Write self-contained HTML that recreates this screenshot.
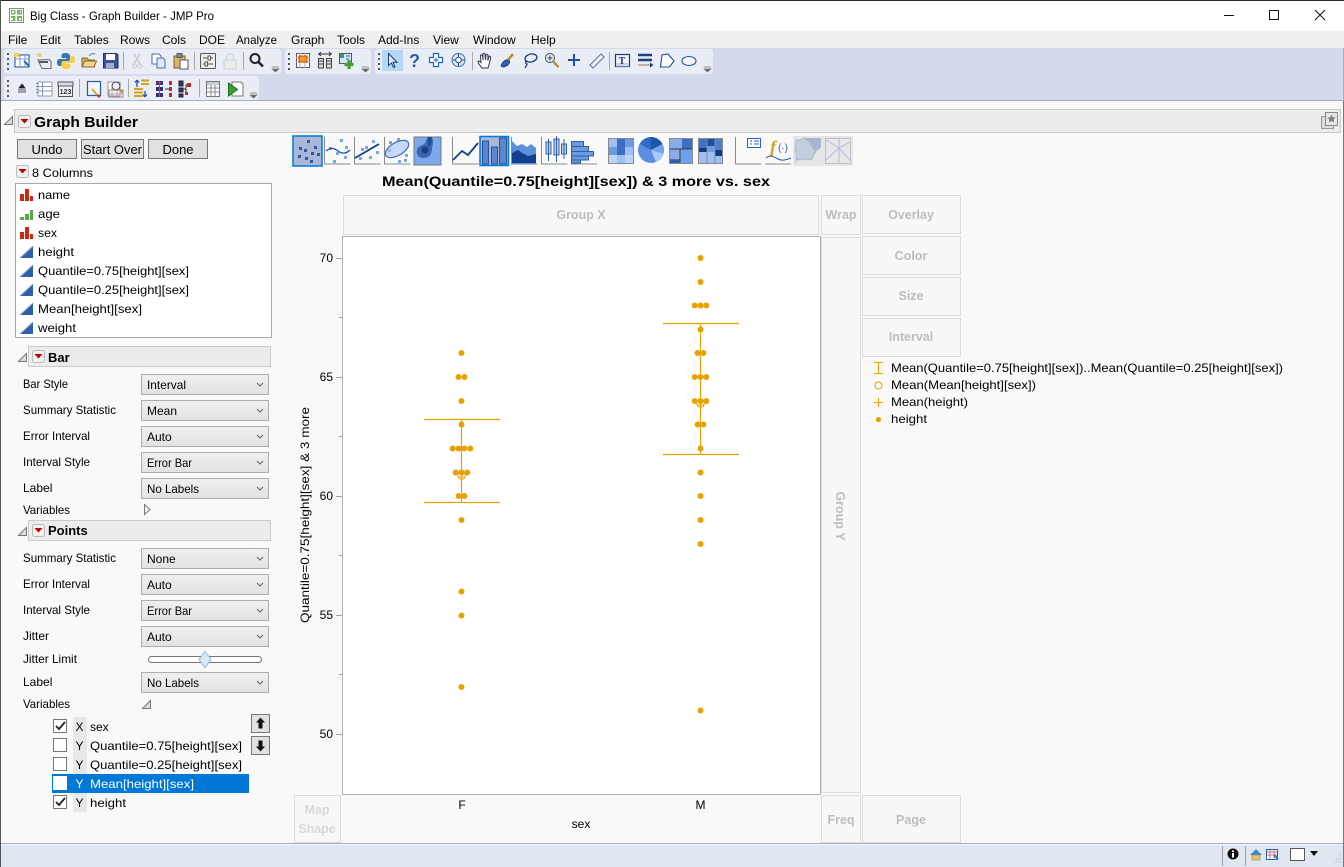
<!DOCTYPE html>
<html><head><meta charset="utf-8"><title>Big Class - Graph Builder - JMP Pro</title>
<style>
html,body{margin:0;padding:0;width:1344px;height:867px;overflow:hidden;background:#f9f9f9}
svg{display:block;position:absolute;left:0;top:0}
text{font-family:"Liberation Sans",sans-serif;font-size:12px;fill:#000}
.b{font-weight:bold}
.g{fill:#bdbdbd;font-weight:bold;font-size:12.5px;text-anchor:middle}
.m{text-anchor:middle}
.e{text-anchor:end}
.z{fill:#f8f8f8;stroke:#dcdcdc}
.sel{fill:#e6e6e6;stroke:#adadad}
.btn{fill:#e1e1e1;stroke:#777}
.hd{fill:#ececec;stroke:#cacaca}
.ck{fill:#fff;stroke:#777}
.d{fill:#e8a200}
.o{stroke:#e8a200;fill:none}
</style></head><body>
<svg width="1344" height="867" viewBox="0 0 1344 867" xmlns="http://www.w3.org/2000/svg">
<defs>
<linearGradient id="sg" x1="0" y1="0" x2="0" y2="1"><stop offset="0" stop-color="#f0f0f0"/><stop offset="1" stop-color="#e2e2e2"/></linearGradient>
<symbol id="red" overflow="visible"><rect x=".5" y=".5" width="12" height="12" rx="2" fill="#f0f0f0" stroke="#bbb"/><path d="M2.5 4h8l-4 4.500z" fill="#c00000"/></symbol>
<symbol id="tri" overflow="visible"><path d="M.5 8.500L8.500 .5v8z" fill="#ddd" stroke="#777"/></symbol>
<symbol id="nom" overflow="visible"><path d="M0 13V6h4v7zM5 13V1h4v12zM10 13V8h3v5z" fill="#c8280f"/></symbol>
<symbol id="ord" overflow="visible"><path d="M0 13v-3h4v3zM5 13V7h4v6z" fill="#57a94a"/><path d="M10 13V3h3v10z" fill="#57a94a"/></symbol>
<symbol id="con" overflow="visible"><path d="M0 13L13 1v12z" fill="#2e5fa8"/><path d="M0 13L13 1" stroke="#8aa8d8" fill="none"/></symbol>
<symbol id="sa" overflow="visible"><path d="M5 5l3 3 3-3" stroke="#666" fill="none" stroke-width="1.100"/></symbol>
<symbol id="dd" overflow="visible"><path d="M0 0h7M0 2h7l-3.500 3z" fill="#666" stroke="#777" stroke-width=".7"/></symbol>
<symbol id="grip" overflow="visible"><path d="M0 0h2v2H0zM0 5h2v2H0zM0 10h2v2H0zM0 15h2v2H0z" fill="#555"/></symbol>
<symbol id="frame" overflow="visible"><path d="M.5 0v27h26" stroke="#8a8a8a" fill="none"/></symbol>
</defs>

<!-- window -->
<rect width="1344" height="867" fill="#f9f9f9"/>
<rect width="1344" height="31" y="1" fill="#fff"/>
<rect width="1344" height="1" fill="#2b2b2b"/>
<rect x="9.500" y="8.500" width="14" height="14" stroke="#8a8a8a" fill="#fff"/>
<path d="M11 10h4.500v4.500H11zM17 10h5v4.500h-5zM11 16h4.500v5H11zM17 16h5v5h-5z" fill="#7fb060"/>
<path d="M12 11h2v2h-2zM20 11h1v2h-1zM11 18h2v2h-2zM19 18h2v2h-2z" fill="#fff"/>
<text x="30" y="20" textLength="184" lengthAdjust="spacingAndGlyphs">Big Class - Graph Builder - JMP Pro</text>
<path d="M1224 15.500h10" stroke="#111"/><rect x="1269.500" y="10.500" width="9" height="9" fill="none" stroke="#111"/><path d="M1315 10l10 10M1325 10l-10 10" stroke="#111"/>

<!-- menu -->
<rect y="31" width="1344" height="17" fill="#efefef"/>
<g>
<text x="8" y="44">File</text><text x="40" y="44">Edit</text><text x="74" y="44">Tables</text><text x="120" y="44">Rows</text><text x="162" y="44">Cols</text><text x="199" y="44">DOE</text><text x="236" y="44" textLength="41" lengthAdjust="spacingAndGlyphs">Analyze</text><text x="291" y="44">Graph</text><text x="337" y="44">Tools</text><text x="378" y="44">Add-Ins</text><text x="433" y="44">View</text><text x="473" y="44">Window</text><text x="531" y="44">Help</text>
</g>

<!-- toolbars -->
<rect y="48" width="1344" height="52" fill="#d4daec"/>
<rect y="100" width="1344" height="1" fill="#a3acd0"/>
<rect x="1343" y="48" width="1" height="53" fill="#a3acd0"/>
<g fill="#e9edf6">
<rect x="4" y="49" width="277" height="25" rx="3"/><rect x="285" y="49" width="86" height="25" rx="3"/><rect x="375" y="49" width="338" height="25" rx="3"/><rect x="4" y="76" width="255" height="24" rx="3"/>
</g>
<use href="#grip" x="7" y="53"/><use href="#grip" x="288" y="53"/><use href="#grip" x="378" y="53"/><use href="#grip" x="7" y="80"/>
<use href="#dd" x="272" y="67"/><use href="#dd" x="362" y="67"/><use href="#dd" x="704" y="67"/><use href="#dd" x="250" y="93"/>
<path d="M123.500 52v18M194.500 52v18M243.500 52v18M472.500 52v18M609.500 52v18M79.500 79v18M128.500 79v18M199.500 79v18" stroke="#a8a8a8"/>

<!-- row 1 group 1 -->
<rect x="15" y="55" width="14" height="12" fill="#fff" stroke="#1d4f91"/><path d="M15 59h14M20 55v12M25 55v12" stroke="#7d9cc4"/><path d="M14 53h5v4h-5z" fill="#f2d24a"/><path d="M24 61l5 5" stroke="#1d6fc4" stroke-width="2"/>
<path d="M38 60l11-.5 2 2v7H42z" fill="#e8edf4" stroke="#667"/><path d="M37 53h5v4h-5z" fill="#efd27a"/><path d="M39 62h9" stroke="#555" stroke-width="2"/>
<path d="M66 53c-3.500 0-4.500 1-4.500 3v2h5v1h-7c-2 0-2.500 1.500-2.500 3.500s1 3.500 2.500 3.500h2v-2.500c0-1.500 1-2.500 2.500-2.500h4c1.500 0 2-1 2-2v-3c0-2-2-3-4-3z" fill="#3a76a8"/>
<path d="M66 69c3.500 0 4.500-1 4.500-3v-2h-5v-1h7c2 0 2.500-1.500 2.500-3.500s-1-3.500-2.500-3.500h-2v2.500c0 1.500-1 2.500-2.500 2.500h-4c-1.500 0-2 1-2 2v3c0 2 2 3 4 3z" fill="#f6cf45"/>
<path d="M82 67v-9h5l1.500 2h6v7z" fill="#d6ad58" stroke="#8a6a2c"/><path d="M82 67l2.500-6h12l-2.500 6z" fill="#f1d58e" stroke="#8a6a2c"/><path d="M89 56c2-2.500 4-3 6.500-2" stroke="#6c8bbd" fill="none"/>
<path d="M103.500 53.500h13l1.500 1.500v13h-14.500z" fill="#3f4f9a" stroke="#22306f"/><rect x="106" y="54" width="9" height="6" fill="#fff"/><rect x="106" y="63" width="8" height="5" fill="#a5aed0"/>
<g opacity=".35"><path d="M134 54l6 10M140 54l-6 10" stroke="#889" stroke-width="1.600"/><circle cx="134.500" cy="66" r="2" fill="none" stroke="#889"/><circle cx="140" cy="66" r="2" fill="none" stroke="#889"/></g>
<path d="M152 54h7l2 2v8h-9z" fill="#fff" stroke="#4a6ea5"/><path d="M157 58h6l2 2v8h-8z" fill="#dfe8f6" stroke="#4a6ea5"/>
<rect x="174" y="56" width="11" height="12" fill="#d9b36a" stroke="#7a5c27"/><rect x="177" y="53.500" width="5" height="4" fill="#888" stroke="#555"/><path d="M180 60h8v9h-8z" fill="#fff" stroke="#556"/>
<rect x="200.500" y="53.500" width="15" height="15" rx="1" fill="#eee" stroke="#555"/><path d="M203 58h5M211 58h2M203 64h2M208 64h5" stroke="#555"/><rect x="208" y="56" width="2.500" height="4" fill="#fff" stroke="#555"/><rect x="205" y="62" width="2.500" height="4" fill="#fff" stroke="#555"/>
<path d="M226.500 60v-3c0-4 7-4 7 0v3" fill="none" stroke="#d6d6d6" stroke-width="1.500"/><rect x="224" y="60" width="12" height="9" fill="#ececec" stroke="#d0d0d0"/>
<circle cx="255" cy="58.500" r="4.500" fill="none" stroke="#222" stroke-width="2"/><path d="M258.500 62l4.500 4.500" stroke="#222" stroke-width="2.500"/>
<!-- group 2 -->
<rect x="296.500" y="53.500" width="13" height="14" fill="#fff" stroke="#556"/><path d="M296 57.500h14M296 62h14M300 53v15M305 53v15" stroke="#c7a0a0"/><rect x="299" y="56" width="8" height="6" fill="#f0a020" stroke="#c04010"/>
<path d="M318 54h14M319 54l2-2M319 54l2 2M331 54l-2-2M331 54l-2 2" stroke="#333" fill="none"/><rect x="318.500" y="58.500" width="5" height="9.500" fill="#ddd" stroke="#444"/><rect x="326.500" y="58.500" width="5" height="9.500" fill="#ddd" stroke="#444"/><path d="M319 61h4M319 64h4M327 61h4M327 64h4" stroke="#444"/>
<rect x="339.500" y="53.500" width="12" height="10" fill="#dbe4f4" stroke="#556"/><path d="M340 54h4v4h-4z" fill="#3d9d58"/><path d="M346 56l4 0M346 59h3" stroke="#2d6fb0"/><path d="M349 60v9M344.500 64.500h9" stroke="#43a02e" stroke-width="3.200"/>
<!-- group 3 -->
<rect x="382" y="50" width="21" height="21" fill="#b5d6f5"/>
<path d="M388.500 53.500v12l3-2.500 2 4.500 1.500-.7-2-4.500h4z" fill="#dbe8f8" stroke="#1c3d78"/>
<text x="414.500" y="67" class="m b" style="font-size:18px;fill:#2c5fa8">?</text>
<path d="M433.500 53.500h5v4h4v5h-4v4h-5v-4h-4v-5h4z" fill="#fff" stroke="#1e5fb4" stroke-width="1.200"/><path d="M436 57.500v5M433.500 60h5" stroke="#1e5fb4"/>
<circle cx="458.500" cy="60" r="6.500" fill="#dfe7f4" stroke="#4a6da8"/><circle cx="458.500" cy="60" r="2.800" fill="#fff" stroke="#1e4f98"/><path d="M458.500 54v3M458.500 63v3M452.500 60h3M461.500 60h3" stroke="#1e4f98"/>
<path d="M482 68c-2-3-4.500-5-4-6.500.5-1 2 0 3 1l-.5-6.500c0-1.500 1.700-1.500 2 0l.6 4-.2-5.500c0-1.500 2-1.500 2.100 0l.5 5.500.5-4.800c.2-1.500 2-1.200 2 .3l-.2 5 1-3.500c.4-1.300 2-1 1.800.5-.4 3-.8 5-2 8.500-.4 1.200-.6 2-.6 2z" fill="#fff" stroke="#334"/>
<path d="M502 64c2-4 6-5 7-4s1 4-3 6-6 0-4-2z" fill="#2e62b8" stroke="#1a3e80"/><path d="M508 60l5-6" stroke="#b98b2d" stroke-width="2.500"/>
<ellipse cx="531" cy="58" rx="6" ry="4" fill="none" stroke="#1d3f7a" stroke-width="1.300" transform="rotate(-12 531 58)"/><path d="M526 61c-1 2 .5 3 1 3s-1 2-2 4" stroke="#1d3f7a" fill="none" stroke-width="1.300"/>
<circle cx="550" cy="58" r="4.500" fill="#e8f0fb" stroke="#444"/><path d="M547.500 58h5M550 55.500v5" stroke="#333"/><path d="M553.500 62l5 5" stroke="#b8902e" stroke-width="2.500"/>
<path d="M574 54v12M568 60h12" stroke="#1e4f98" stroke-width="2"/>
<path d="M590 65l11-11 3 3-11 11z" fill="#eef2fa" stroke="#6680a8" stroke-width="1.200"/>
<rect x="615.500" y="54.500" width="14" height="12" fill="#f0f4fb" stroke="#1e3a70" stroke-width="1.200"/><path d="M616 64h13M616 66h13" stroke="#aab8d0"/><text x="622" y="64" class="b m" style="font-family:'Liberation Serif',serif;font-size:10px;fill:#1a3a78">T</text>
<path d="M638 55h14" stroke="#1e3f80" stroke-width="2.500"/><path d="M638 60h14" stroke="#1e3f80" stroke-width="2.500"/><path d="M638 65h13" stroke="#a08040"/><path d="M650 62.500l3.500 2.500-3.500 2.500z" fill="#1e3f80"/>
<path d="M660.500 67l1.500-12 6-1 6 7-4.500 6z" fill="#fff" stroke="#1e4f98" stroke-width="1.100"/>
<ellipse cx="689" cy="61" rx="7" ry="4.500" fill="#f4f7fc" stroke="#1e4f98" stroke-width="1.100"/>
<!-- row 2 -->
<path d="M22 84l3 4h-6zM18 90h8M18 92h8" fill="#222" stroke="#222" stroke-width=".8"/>
<path d="M38 82h14v14H38z" fill="#fff" stroke="#999"/><path d="M38 86.500h14M38 91h14M42.500 82v14" stroke="#7e97b8"/><path d="M37 83v12" stroke="#444" stroke-dasharray="1 2"/>
<rect x="58.500" y="82.500" width="14" height="14" fill="#eef2f8" stroke="#555"/><rect x="58" y="82" width="15" height="4" fill="#d8dfea" stroke="#555"/><text x="65.500" y="94" class="m" style="font-size:7px;fill:#333;font-weight:bold">123</text>
<rect x="87.500" y="81.500" width="13" height="14" fill="#f2f6fd" stroke="#285aa6" stroke-width="1.200"/><path d="M92 89l6 7" stroke="#e0a030" stroke-width="2"/><path d="M97 95l3 2" stroke="#c8281e" stroke-width="2"/>
<path d="M108 82h12v14h-12z" fill="#fff" stroke="#999"/><path d="M108 90h14M108 94h14M112 88v10M117 88v10" stroke="#c09a9a"/><rect x="109" y="90" width="14" height="7" fill="none" stroke="#a88"/><circle cx="116" cy="86" r="4" fill="#e8f0fa" stroke="#444"/><path d="M119 89l3.500 3.500" stroke="#b8902e" stroke-width="1.800"/>
<path d="M137 80v7M137 80l-2 2.500M137 80l2 2.500" stroke="#285aa6" fill="none" stroke-width="1.400"/><path d="M145 91v6M145 97l-2-2.500M145 97l2-2.500" stroke="#285aa6" fill="none" stroke-width="1.400"/><path d="M141 80.500h8M141 84h8M134 89h9M134 92.500h9M134 96h9" stroke="#d7a21f" stroke-width="2"/>
<path d="M156 81h7v4h-7zM156 87h7v4h-7zM156 93h7v4h-7z" fill="#3a2a7a"/><path d="M157 83h5M159.500 81v16" stroke="#d04040"/><path d="M169 81h3v4h-3zM169 87h3v4h-3zM169 93h3v4h-3z" fill="#c02a2a"/><path d="M165 89h4" stroke="#222"/>
<path d="M179 81h4v5h-4zM179 88h4v4h-4zM179 94h4v3h-4z" fill="#3a2a7a" stroke="#222"/><path d="M183 89h3v-4h3M183 89h3v4" stroke="#333" fill="none"/><rect x="187" y="83" width="4" height="4" fill="#c02a2a"/><rect x="185" y="92" width="3" height="3" fill="#c02a2a"/>
<rect x="206.500" y="81.500" width="13" height="15" fill="#fff" stroke="#777"/><rect x="207" y="82" width="12" height="3.500" fill="#c8ccd4"/><path d="M207 88h12M207 92h12M211 85v12M215 85v12" stroke="#888"/>
<path d="M232 82h9l2 2v12h-11z" fill="#fff" stroke="#777"/><path d="M228.500 83v13l9-6.500z" fill="#3aa03a" stroke="#177417"/>

<!-- header -->
<path d="M0 101.500h1344" stroke="#f7f7f7"/>
<rect x="14.500" y="109.500" width="1326" height="23" class="hd"/>
<use href="#tri" x="4" y="116"/>
<use href="#red" x="18" y="115"/>
<text x="34" y="127" class="b" style="font-size:15px" textLength="104" lengthAdjust="spacingAndGlyphs">Graph Builder</text>
<rect x="1321.500" y="116.500" width="12" height="12" fill="#dcdcdc" stroke="#999"/><rect x="1325.500" y="112.500" width="12" height="13" fill="#e6e6e6" stroke="#8a8a8a"/><path d="M1331.500 114.500l1.300 2.800 3 .3-2.300 2 .7 3-2.700-1.600-2.700 1.600.7-3-2.300-2 3-.3z" fill="#808080"/>

<!-- left buttons -->
<rect x="17.500" y="139.500" width="59" height="19" class="btn"/><rect x="81.500" y="139.500" width="62" height="19" class="btn"/><rect x="148.500" y="139.500" width="59" height="19" class="btn"/>
<text x="47" y="154" class="m" style="font-size:13px">Undo</text><text x="112.500" y="154" class="m" style="font-size:12.500px" textLength="59" lengthAdjust="spacingAndGlyphs">Start Over</text><text x="178" y="154" class="m" style="font-size:13px">Done</text>
<use href="#red" x="16" y="165"/>
<text x="32" y="177" textLength="61" lengthAdjust="spacingAndGlyphs">8 Columns</text>

<!-- column list -->
<rect x="15.500" y="183.500" width="256" height="154" fill="#fff" stroke="#a8a8a8"/>
<use href="#nom" x="20" y="188"/><use href="#ord" x="20" y="207"/><use href="#nom" x="20" y="226"/><use href="#con" x="20" y="245"/><use href="#con" x="20" y="264"/><use href="#con" x="20" y="283"/><use href="#con" x="20" y="302"/><use href="#con" x="20" y="321"/>
<text x="38" y="199" textLength="32" lengthAdjust="spacingAndGlyphs">name</text><text x="38" y="218" textLength="22" lengthAdjust="spacingAndGlyphs">age</text><text x="38" y="237" textLength="19" lengthAdjust="spacingAndGlyphs">sex</text><text x="38" y="256" textLength="36" lengthAdjust="spacingAndGlyphs">height</text>
<text x="38" y="275" textLength="151" lengthAdjust="spacingAndGlyphs">Quantile=0.75[height][sex]</text><text x="38" y="294" textLength="151" lengthAdjust="spacingAndGlyphs">Quantile=0.25[height][sex]</text><text x="38" y="313" textLength="104" lengthAdjust="spacingAndGlyphs">Mean[height][sex]</text><text x="38" y="332" textLength="38" lengthAdjust="spacingAndGlyphs">weight</text>

<!-- Bar -->
<use href="#tri" x="18" y="353"/>
<rect x="28.500" y="346.500" width="242" height="20" class="hd"/>
<use href="#red" x="32" y="350"/><text x="48" y="362" class="b" style="font-size:13px">Bar</text>
<text x="23" y="388" textLength="45" lengthAdjust="spacingAndGlyphs">Bar Style</text><text x="23" y="414" textLength="93" lengthAdjust="spacingAndGlyphs">Summary Statistic</text><text x="23" y="440" textLength="67" lengthAdjust="spacingAndGlyphs">Error Interval</text><text x="23" y="466" textLength="67" lengthAdjust="spacingAndGlyphs">Interval Style</text><text x="23" y="492">Label</text><text x="23" y="514" textLength="47" lengthAdjust="spacingAndGlyphs">Variables</text>
<rect x="141.500" y="374.500" width="127" height="20" class="sel" style="fill:url(#sg)"/><rect x="141.500" y="400.500" width="127" height="20" class="sel" style="fill:url(#sg)"/><rect x="141.500" y="426.500" width="127" height="20" class="sel" style="fill:url(#sg)"/><rect x="141.500" y="452.500" width="127" height="20" class="sel" style="fill:url(#sg)"/><rect x="141.500" y="478.500" width="127" height="20" class="sel" style="fill:url(#sg)"/>
<use href="#sa" x="252" y="378"/><use href="#sa" x="252" y="404"/><use href="#sa" x="252" y="430"/><use href="#sa" x="252" y="456"/><use href="#sa" x="252" y="482"/>
<text x="147" y="389" textLength="39" lengthAdjust="spacingAndGlyphs">Interval</text><text x="147" y="415" textLength="30" lengthAdjust="spacingAndGlyphs">Mean</text><text x="147" y="441">Auto</text><text x="147" y="467" textLength="45" lengthAdjust="spacingAndGlyphs">Error Bar</text><text x="147" y="493" textLength="52" lengthAdjust="spacingAndGlyphs">No Labels</text>
<path d="M144.500 504.500l5.500 5-5.500 5z" fill="#f4f4f4" stroke="#777"/>

<!-- Points -->
<use href="#tri" x="18" y="527"/>
<rect x="28.500" y="520.500" width="242" height="20" class="hd"/>
<use href="#red" x="32" y="524"/><text x="48" y="535" class="b" style="font-size:13px">Points</text>
<text x="23" y="562" textLength="93" lengthAdjust="spacingAndGlyphs">Summary Statistic</text><text x="23" y="588" textLength="67" lengthAdjust="spacingAndGlyphs">Error Interval</text><text x="23" y="614" textLength="67" lengthAdjust="spacingAndGlyphs">Interval Style</text><text x="23" y="640">Jitter</text><text x="23" y="663" textLength="54" lengthAdjust="spacingAndGlyphs">Jitter Limit</text><text x="23" y="686">Label</text><text x="23" y="708" textLength="47" lengthAdjust="spacingAndGlyphs">Variables</text>
<rect x="141.500" y="548.500" width="127" height="20" class="sel" style="fill:url(#sg)"/><rect x="141.500" y="574.500" width="127" height="20" class="sel" style="fill:url(#sg)"/><rect x="141.500" y="600.500" width="127" height="20" class="sel" style="fill:url(#sg)"/><rect x="141.500" y="626.500" width="127" height="20" class="sel" style="fill:url(#sg)"/><rect x="141.500" y="672.500" width="127" height="20" class="sel" style="fill:url(#sg)"/>
<use href="#sa" x="252" y="552"/><use href="#sa" x="252" y="578"/><use href="#sa" x="252" y="604"/><use href="#sa" x="252" y="630"/><use href="#sa" x="252" y="676"/>
<text x="147" y="563">None</text><text x="147" y="589">Auto</text><text x="147" y="615" textLength="45" lengthAdjust="spacingAndGlyphs">Error Bar</text><text x="147" y="641">Auto</text><text x="147" y="687" textLength="52" lengthAdjust="spacingAndGlyphs">No Labels</text>
<rect x="148.500" y="656.500" width="113" height="6" rx="3" fill="#fff" stroke="#777"/>
<path d="M205 651.500l6 8-6 8-6-8z" fill="#dbe8f8" stroke="#9ab4d4"/>
<use href="#tri" x="142" y="700"/>

<!-- variables -->
<rect x="73" y="717" width="14" height="95" fill="#e8e8e8"/>
<rect x="52" y="774" width="197" height="19" fill="#0078d7"/>
<rect x="53.500" y="719.500" width="13" height="13" class="ck"/><rect x="53.500" y="738.500" width="13" height="13" class="ck"/><rect x="53.500" y="757.500" width="13" height="13" class="ck"/><rect x="53.500" y="776.500" width="13" height="13" fill="#fff" stroke="#fff"/><rect x="53.500" y="795.500" width="13" height="13" class="ck"/>
<path d="M56 726l3 3 6-7M56 802l3 3 6-7" fill="none" stroke="#222" stroke-width="1.800"/>
<text x="79.500" y="731" class="m">X</text><text x="79.500" y="750" class="m">Y</text><text x="79.500" y="769" class="m">Y</text><text x="79.500" y="788" class="m" style="fill:#fff">Y</text><text x="79.500" y="807" class="m">Y</text>
<text x="90" y="731">sex</text><text x="90" y="750" textLength="152" lengthAdjust="spacingAndGlyphs">Quantile=0.75[height][sex]</text><text x="90" y="769" textLength="152" lengthAdjust="spacingAndGlyphs">Quantile=0.25[height][sex]</text><text x="90" y="788" style="fill:#fff" textLength="104" lengthAdjust="spacingAndGlyphs">Mean[height][sex]</text><text x="90" y="807" textLength="36" lengthAdjust="spacingAndGlyphs">height</text>
<rect x="251.500" y="714.500" width="18" height="18" class="btn"/><rect x="251.500" y="736.500" width="18" height="18" class="btn"/>
<path d="M260.500 717.500l4.500 5h-2.500v6h-4v-6H256z" fill="#111"/><path d="M260.500 751.500l4.500-5h-2.500v-6h-4v6H256z" fill="#111"/>

<!-- graph type icons -->
<rect x="793" y="136" width="60" height="30" fill="#e6e6e6"/>
<rect x="293" y="136" width="29" height="30" fill="#a9b8d8" stroke="#0078d7" stroke-width="1.500"/>
<g fill="#2a5ba8"><rect x="299" y="147" width="3" height="3"/><rect x="307" y="140" width="3" height="3"/><rect x="314" y="146" width="3" height="3"/><rect x="304" y="149" width="3" height="3"/><rect x="311" y="152" width="3" height="3"/><rect x="317" y="153" width="3" height="3"/><rect x="305" y="157" width="3" height="3"/><rect x="310" y="160" width="3" height="3"/><rect x="298" y="155" width="3" height="3"/></g>
<use href="#frame" x="324" y="137"/><use href="#frame" x="354" y="137"/><use href="#frame" x="384" y="137"/>
<g fill="#7ea5df"><rect x="340" y="139" width="3" height="3"/><rect x="329" y="147" width="3" height="3"/><rect x="345" y="146" width="3" height="3"/><rect x="336" y="152" width="3" height="3"/><rect x="333" y="160" width="3" height="3"/><rect x="344" y="156" width="3" height="3"/><rect x="372" y="140" width="3" height="3"/><rect x="365" y="146" width="3" height="3"/><rect x="361" y="148" width="3" height="3"/><rect x="376" y="151" width="3" height="3"/><rect x="359" y="157" width="3" height="3"/><rect x="369" y="156" width="3" height="3"/><rect x="389" y="141" width="3" height="3"/><rect x="397" y="138" width="3" height="3"/><rect x="388" y="149" width="3" height="3"/><rect x="405" y="154" width="3" height="3"/><rect x="398" y="160" width="3" height="3"/><rect x="404" y="159" width="3" height="3"/></g>
<path d="M326 151c5-4 8-3 12 0s8 3 12-1" stroke="#1f52a0" fill="none" stroke-width="1.300"/>
<path d="M355 158l24-14" stroke="#123f8e" fill="none" stroke-width="1.800"/>
<ellipse cx="397" cy="149" rx="13" ry="6.500" transform="rotate(-30 397 149)" fill="#a3c2f0" fill-opacity=".6" stroke="#3a6fb8" stroke-width="1.200"/>
<rect x="414" y="137" width="27" height="28" fill="#7ea8ec" stroke="#777"/><path d="M429 137c3 0 4 2 4 4 0 4-1 6-1 8 0 6-4 9-9 9-5 0-7-4-6-8 1-5 6-4 8-7 1-2 2-6 4-6z" fill="#3a68ae"/><circle cx="425" cy="150" r="3.500" fill="#163f85"/><path d="M428 137h4l-1 8-3 2z" fill="#1c4b92"/>
<use href="#frame" x="452" y="137"/>
<path d="M453 160l9-9 6 4 10-12" stroke="#103f90" fill="none" stroke-width="1.800"/>
<rect x="480" y="136.500" width="28.500" height="29" fill="#a9b8d8" stroke="#0078d7" stroke-width="1.500"/>
<path d="M482.500 164V141h6v23zM491.500 164v-17h6v17zM499.500 164v-26h7v26z" fill="#5b86cc" stroke="#24539e"/>
<use href="#frame" x="511" y="137"/>
<path d="M512 141l5 5 5-2 5 3 4-3 5 4v16h-24z" fill="#5c8fd8"/><path d="M512 153l6-3 4 3 6 3 8-2v9h-24z" fill="#0f3f8e"/>
<use href="#frame" x="541" y="137"/>
<rect x="546" y="142" width="5" height="12" fill="#b5cff4" stroke="#2f5fa6"/><rect x="554" y="139" width="5" height="16" fill="#b5cff4" stroke="#2f5fa6"/><rect x="561.500" y="144" width="5" height="10" fill="#b5cff4" stroke="#2f5fa6"/><path d="M548.500 139v22M556.500 136v26M564 139v20" stroke="#2f5fa6"/>
<path d="M571.500 141.500h12v5h5v5h5v4.500h-5v4h-8v3h-9z" fill="#6d9ae0" stroke="#2f5fa6"/><path d="M571.500 146.500h12M571.500 151.500h17M571.500 156h17M571.500 160h9" stroke="#2f5fa6"/><path d="M571 164h26" stroke="#8a8a8a"/>
<rect x="608.500" y="138.500" width="25" height="25" fill="#6d9ae0" stroke="#8a8a8a"/><path d="M609 139h8v8h-8zM625 147h8v8h-8zM617 155h8v8h-8z" fill="#9fc0f4"/><path d="M617 139h8v8h-8zM617 155h8v-8h-8z" fill="#3c6fc4"/><path d="M625 155h8v8h-8zM609 155h8v8h-8z" fill="#bcd4f8"/>
<circle cx="651" cy="150" r="13" fill="#5a8fe0"/><path d="M651 150V137a13 13 0 0 1 11.500 7z" fill="#1f55a6"/><path d="M651 150l11.500-6a13 13 0 0 1 .5 9.500z" fill="#74a3ea"/><path d="M651 150l12 3.500a13 13 0 0 1-7 8.500z" fill="#a9c8f6"/><path d="M651 150V137a13 13 0 0 0-11 7z" fill="#2f6ac4"/>
<rect x="669.500" y="138.500" width="23" height="25" fill="#8aadea" stroke="#8a8a8a"/><rect x="682" y="139" width="10" height="10" fill="#3c6fc4"/><path d="M670 149h22M680 149v14M670 160h10" stroke="#333"/><path d="M681 150h11v13h-11z" fill="#6aa2f0"/><path d="M670 160h10v3h-10z" fill="#2d5fb0"/>
<rect x="698.500" y="138.500" width="24" height="25" fill="#9cc0f4" stroke="#8a8a8a"/><path d="M699 139h8v9h-8z" fill="#3e72c6"/><path d="M707 139h8v7h-8z" fill="#1a4f9e"/><path d="M715 139h7v11h-7z" fill="#4b7fd0"/><path d="M699 148h8v4h-8zM715 150h7v6h-7z" fill="#0d3b85"/><path d="M707 146h8v6h-8z" fill="#6a9de6"/><path d="M707 138v26M715 138v26" stroke="#8a8a8a"/>
<use href="#frame" x="735" y="137"/>
<rect x="747.500" y="138.500" width="13" height="9" fill="#fff" stroke="#2a5fbe"/><path d="M750 141h2M750 144h2M754 141h5M754 144h5" stroke="#2a5fbe"/>
<text x="773" y="153" style="font-family:'Liberation Serif',serif;font-style:italic;font-weight:bold;font-size:18px;fill:#d6a31c" class="m">f</text><text x="783" y="151" style="font-size:10px;fill:#2a5fbe" class="m">(·)</text>
<path d="M766 158c5-4 8-1 12 1s8 1 13-1" stroke="#1e5bb0" fill="none"/><path d="M765 164h26" stroke="#8a8a8a"/>
<path d="M796 141l9-3 6 6 5 7-5 9-6-1-8 1-2-10z" fill="#c3cde0" stroke="#a9b5cb"/><path d="M806 138h15v10l-6 4-5-8z" fill="#a9b6d0"/><path d="M796 137v27" stroke="#bfc7d6"/>
<rect x="825.500" y="138.500" width="25" height="25" fill="#e8e8e8" stroke="#bcc0c8"/><path d="M826 140l13 8 11-6M826 160l13-12 11 12M839 139v24" stroke="#b6c4de" fill="none" stroke-width="1.200"/>

<text x="382" y="186" class="b" style="font-size:14px" textLength="388" lengthAdjust="spacingAndGlyphs">Mean(Quantile=0.75[height][sex]) &amp; 3 more vs. sex</text>

<!-- drop zones -->
<rect x="343.500" y="195.500" width="475" height="39" class="z"/>
<rect x="821.500" y="195.500" width="39" height="39" class="z"/>
<rect x="862.500" y="195.500" width="98" height="38" class="z"/>
<rect x="862.500" y="236.500" width="98" height="38" class="z"/>
<rect x="862.500" y="277.500" width="98" height="38" class="z"/>
<rect x="862.500" y="318.500" width="98" height="38" class="z"/>
<rect x="821.500" y="237.500" width="39" height="555" class="z"/>
<rect x="294.500" y="795.500" width="46" height="47" class="z"/>
<rect x="821.500" y="795.500" width="39" height="47" class="z"/>
<rect x="862.500" y="795.500" width="98" height="47" class="z"/>
<text x="581" y="219" class="g">Group X</text><text x="841" y="219" class="g">Wrap</text><text x="911" y="219" class="g">Overlay</text><text x="911" y="260" class="g">Color</text><text x="911" y="300" class="g">Size</text><text x="911" y="341" class="g">Interval</text>
<text transform="translate(836 516) rotate(90)" class="g">Group Y</text>
<text x="317" y="814" class="g" style="fill:#d8d8d8">Map</text><text x="317" y="833" class="g" style="fill:#d8d8d8">Shape</text>
<text x="841" y="824" class="g">Freq</text><text x="911" y="824" class="g">Page</text>

<!-- plot -->
<rect x="342.500" y="236.500" width="478" height="558" fill="#fff" stroke="#b0b0b0"/>
<path d="M336 258.500h6M336 377.500h6M336 496.500h6M336 615.500h6M336 734.500h6M339 317.500h3M339 436.500h3M339 555.500h3M339 674.500h3" stroke="#a4a4a4"/>
<text x="333" y="262" class="e">70</text><text x="333" y="381" class="e">65</text><text x="333" y="500" class="e">60</text><text x="333" y="619" class="e">55</text><text x="333" y="738" class="e">50</text>
<text transform="translate(309 515) rotate(-90)" class="m" textLength="216" lengthAdjust="spacingAndGlyphs">Quantile=0.75[height][sex] &amp; 3 more</text>
<text x="462" y="809" class="m">F</text><text x="700.500" y="809" class="m">M</text><text x="581" y="828" class="m">sex</text>
<path d="M424 419.500h76M424 502.500h76M461.500 419v84M663 323.500h76M663 454.500h76M700.500 323v132" stroke="#e8a200" stroke-width="1.200" fill="none"/>
<circle cx="461.500" cy="475.500" r="3.800" class="o"/><path d="M458 477h7M461.500 473v7" class="o"/>
<circle cx="700.500" cy="403.500" r="3.800" class="o"/><path d="M697 405h7" class="o"/>
<g class="d">
<circle cx="461.500" cy="353" r="3"/><circle cx="458.500" cy="377" r="3"/><circle cx="464.500" cy="377" r="3"/><circle cx="461.500" cy="401" r="3"/><circle cx="461.500" cy="424.500" r="3"/>
<circle cx="452.700" cy="448.500" r="3"/><circle cx="458.600" cy="448.500" r="3"/><circle cx="464.400" cy="448.500" r="3"/><circle cx="470.300" cy="448.500" r="3"/>
<circle cx="455.700" cy="472.500" r="3"/><circle cx="461.500" cy="472.500" r="3"/><circle cx="467.300" cy="472.500" r="3"/>
<circle cx="458.600" cy="496" r="3"/><circle cx="464.400" cy="496" r="3"/><circle cx="461.500" cy="520" r="3"/><circle cx="461.500" cy="591.500" r="3"/><circle cx="461.500" cy="615.500" r="3"/><circle cx="461.500" cy="687" r="3"/>
<circle cx="700.500" cy="258" r="3"/><circle cx="700.500" cy="282" r="3"/><circle cx="694.700" cy="305.500" r="3"/><circle cx="700.500" cy="305.500" r="3"/><circle cx="706.300" cy="305.500" r="3"/><circle cx="700.500" cy="329.500" r="3"/>
<circle cx="697.600" cy="353" r="3"/><circle cx="703.400" cy="353" r="3"/><circle cx="694.700" cy="377" r="3"/><circle cx="700.500" cy="377" r="3"/><circle cx="706.300" cy="377" r="3"/>
<circle cx="694.700" cy="401" r="3"/><circle cx="700.500" cy="401" r="3"/><circle cx="706.300" cy="401" r="3"/><circle cx="697.600" cy="424.500" r="3"/><circle cx="703.400" cy="424.500" r="3"/>
<circle cx="700.500" cy="448.500" r="3"/><circle cx="700.500" cy="472.500" r="3"/><circle cx="700.500" cy="496" r="3"/><circle cx="700.500" cy="520" r="3"/><circle cx="700.500" cy="544" r="3"/><circle cx="700.500" cy="710.500" r="3"/>
</g>

<!-- legend -->
<path d="M874 362.500h9M878.500 362v12M874 373.500h9" stroke="#e8a200"/>
<circle cx="878.500" cy="385.500" r="3.500" class="o"/>
<path d="M874 402.500h9M878.500 398v9" stroke="#e8a200"/>
<circle cx="878.500" cy="419.500" r="2.600" class="d"/>
<text x="891" y="372" textLength="392" lengthAdjust="spacingAndGlyphs">Mean(Quantile=0.75[height][sex])..Mean(Quantile=0.25[height][sex])</text>
<text x="891" y="389" textLength="145" lengthAdjust="spacingAndGlyphs">Mean(Mean[height][sex])</text>
<text x="891" y="406" textLength="77" lengthAdjust="spacingAndGlyphs">Mean(height)</text>
<text x="891" y="423" textLength="36" lengthAdjust="spacingAndGlyphs">height</text>

<!-- status -->
<rect y="843" width="1344" height="1" fill="#a3acd0"/>
<rect y="844" width="1344" height="1" fill="#f4f6fa"/>
<rect y="845" width="1344" height="22" fill="#e1e7f1"/>
<path d="M1222.500 846v20M1245.500 846v20" stroke="#9aa0ac"/>
<circle cx="1233" cy="854" r="5.500" fill="#111"/><rect x="1232" y="853" width="2" height="4.500" fill="#fff"/><rect x="1232" y="850.500" width="2" height="1.500" fill="#fff"/>
<path d="M1250 855l6-6 6 6z" fill="#2f8fd0"/><rect x="1252" y="855" width="8" height="5" fill="#e6c47c" stroke="#a07c30" stroke-width=".6"/>
<rect x="1266.500" y="849.500" width="11" height="10" fill="#fff" stroke="#2a5fbe"/><path d="M1267 852h10M1267 855h10M1270 850v9M1274 850v9" stroke="#d07070"/><path d="M1274 855l4 4" stroke="#2a7fd0" stroke-width="2"/>
<rect x="1290.500" y="848.500" width="14" height="12" fill="#fff" stroke="#555"/>
<path d="M1310 851h8l-4 5z" fill="#111"/>
<path d="M1340 853h1M1338 856h1M1340 856h1M1336 859h1M1338 859h1M1340 859h1M1334 862h1M1336 862h1M1338 862h1M1340 862h1" stroke="#b4b8c0"/>
<rect y="0" width="1" height="867" fill="#555"/><rect x="1343" y="101" width="1" height="766" fill="#777"/>
</svg>
</body></html>
